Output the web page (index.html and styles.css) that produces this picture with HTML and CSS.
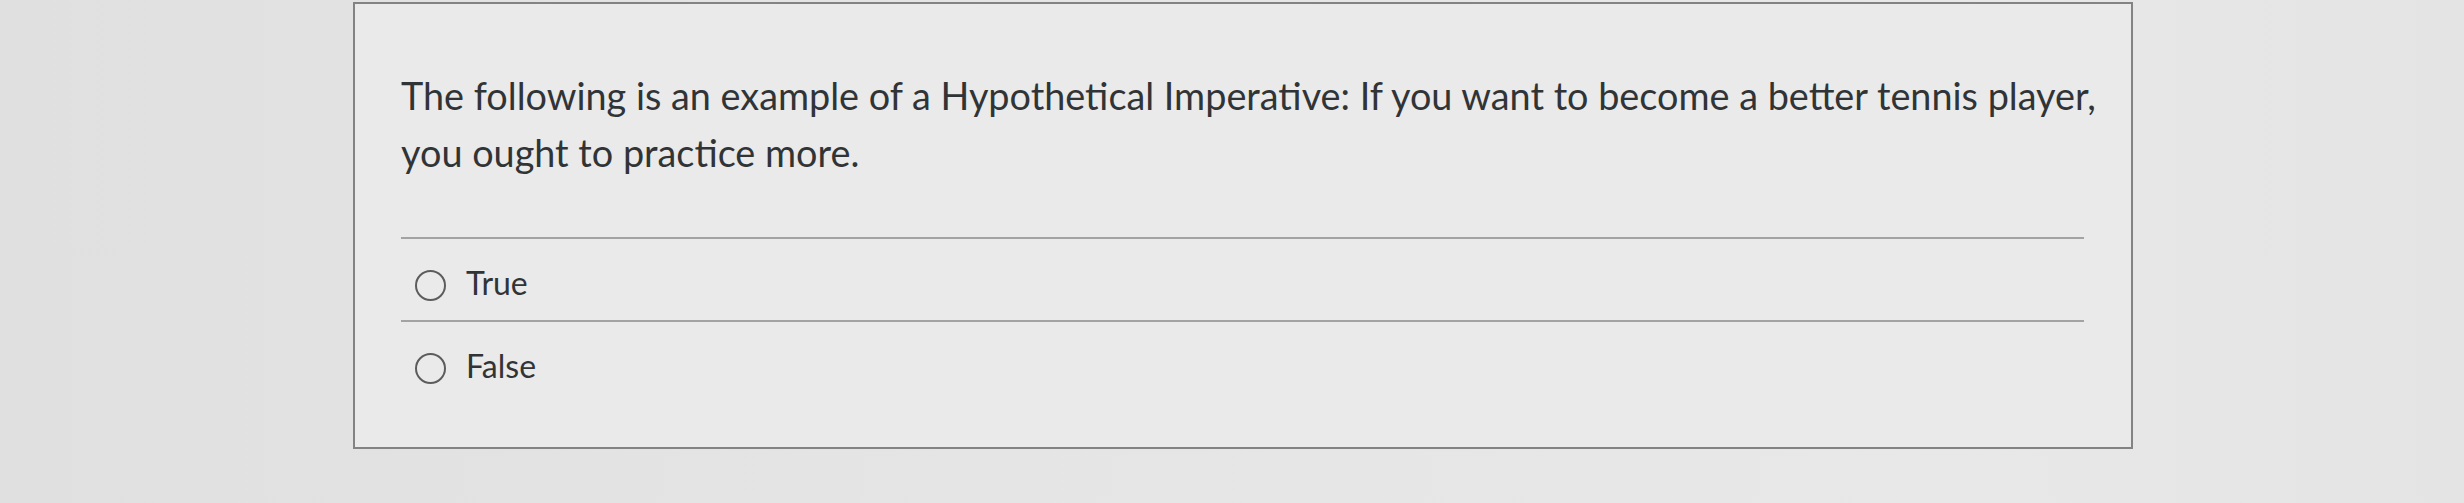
FILE: index.html
```html
<!DOCTYPE html>
<html lang="en">
<head>
<meta charset="utf-8">
<title>Quiz question</title>
<link rel="stylesheet" href="styles.css">
</head>
<body>
<div class="page">
  <div class="card">
    <p class="question">The following is an example of a Hypothetical Imperative: If you want to become a better tennis player, you ought to practice more.</p>
    <div class="options">
      <label class="option"><span class="radio"></span><span class="label">True</span></label>
      <label class="option"><span class="radio"></span><span class="label">False</span></label>
    </div>
  </div>
</div>
</body>
</html>
```
FILE: styles.css
```css
html, body {
  margin: 0;
  padding: 0;
}
body {
  width: 2464px;
  height: 503px;
  overflow: hidden;
  background: linear-gradient(90deg, #e0e0e0 0%, #e5e5e5 40%, #e8e8e8 80%, #e4e4e4 100%);
  font-family: Lato, "Open Sans", sans-serif;
  color: #313436;
}
.page {
  padding: 2px 0 0 353px;
}
.card {
  width: 1780px;
  height: 447px;
  box-sizing: border-box;
  border: 2px solid #838383;
  background: #eaeaea;
  padding: 63px 47px 0 46px;
}
.question {
  margin: 0 -30px 56px 0;
  font-size: 37.8px;
  line-height: 57px;
}
.option {
  display: flex;
  align-items: center;
  gap: 20px;
  height: 83px;
  box-sizing: border-box;
  padding: 12px 0 0 14px;
  border-top: 2px solid #a3a3a3;
}
.radio {
  width: 31px;
  height: 31px;
  box-sizing: border-box;
  border: 2px solid #5c5c5c;
  border-radius: 50%;
  flex: none;
}
.label {
  font-size: 32px;
  line-height: 34px;
  margin-bottom: 5px;
}
```
